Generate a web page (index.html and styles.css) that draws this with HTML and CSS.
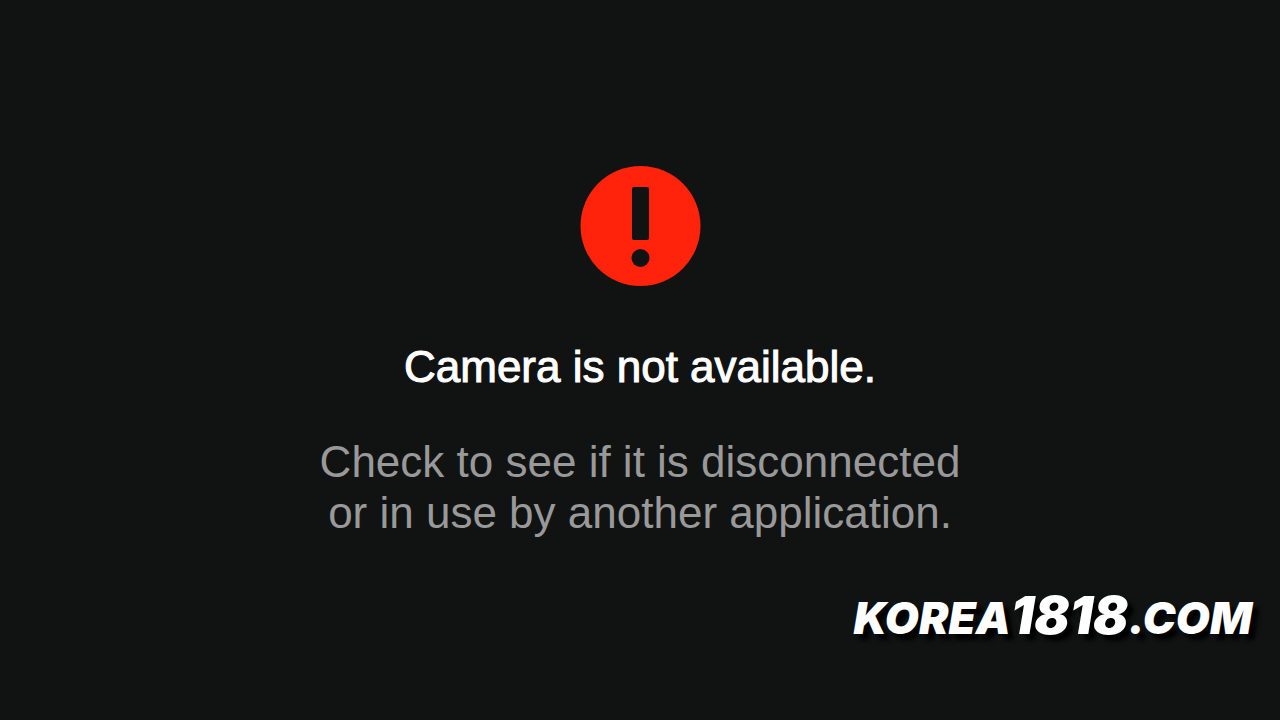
FILE: index.html
```html
<!DOCTYPE html>
<html lang="en">

<head>
    <meta charset="UTF-8">
    <meta name="viewport" content="width=device-width, initial-scale=1.0">
    <title>Camera is not available</title>
    <link rel="stylesheet" href="styles.css">
</head>

<body>
    <main class="message">
        <svg class="icon" viewBox="0 0 120 120" aria-hidden="true">
            <circle cx="60.5" cy="60" r="60" fill="#ff230c" />
            <rect x="52" y="21" width="17" height="53" rx="2" fill="#111313" />
            <circle cx="60.5" cy="92" r="9" fill="#111313" />
        </svg>
        <h1>Camera is not available.</h1>
        <p>Check to see if it is disconnected<br>or in use by another application.</p>
    </main>

    <div class="watermark">KOREA<span class="digits">1818</span>.COM</div>
</body>

</html>
```
FILE: styles.css
```css
* {
    box-sizing: border-box;
    margin: 0;
    padding: 0;
}

body {
    min-height: 100vh;
    background-color: #111313;
    font-family: "Liberation Sans", Arial, sans-serif;
    position: relative;
}

.message {
    display: flex;
    flex-direction: column;
    align-items: center;
    padding-top: 166px;
    text-align: center;
}

.icon {
    width: 120px;
    height: 120px;
    overflow: visible;
}

h1 {
    margin-top: 56px;
    color: #fff;
    font-size: 44px;
    font-weight: 400;
    line-height: 50px;
    -webkit-text-stroke: 1px #fff;
}

p {
    margin-top: 44px;
    color: #999;
    font-size: 44px;
    line-height: 51px;
}

.watermark {
    position: absolute;
    right: 28px;
    bottom: 77px;
    color: #fff;
    font-family: Inter, "Liberation Sans", sans-serif;
    font-size: 44px;
    font-style: italic;
    font-weight: 900;
    line-height: 50px;
    text-shadow: 6px 6px 4px #000;
}

.digits {
    font-size: 52px;
}
```
